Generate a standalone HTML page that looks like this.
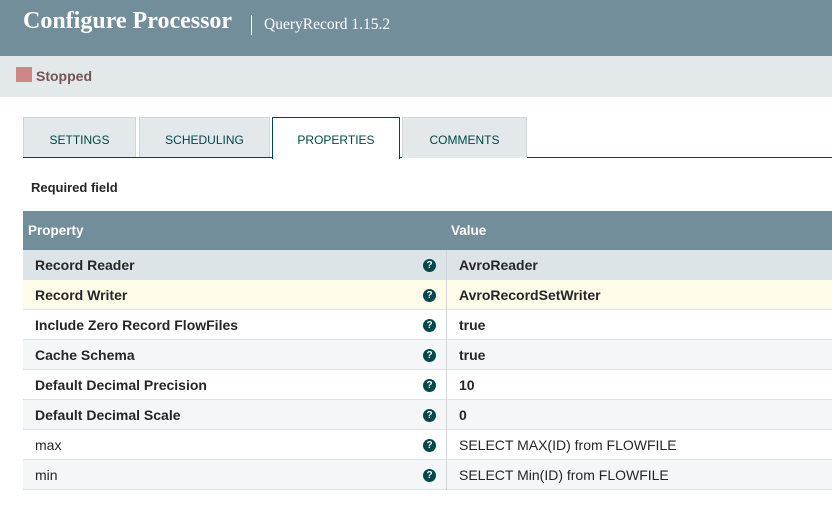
<!DOCTYPE html>
<html><head><style>
*{margin:0;padding:0;box-sizing:border-box}
body{width:832px;height:524px;overflow:hidden;background:#fff;font-family:"Liberation Sans",sans-serif;position:relative}
.hdr{position:absolute;left:0;top:0;width:832px;height:56px;background:#728e9b}
.title{position:absolute;left:23px;top:8px;color:#fff;font-family:"Liberation Serif",serif;font-weight:bold;font-size:24px}
.sep{position:absolute;left:251px;top:15px;width:1px;height:20px;background:#fff}
.sub{position:absolute;left:264px;top:16px;color:#fff;font-family:"Liberation Serif",serif;font-size:15.5px}
.st{position:absolute;left:0;top:56px;width:832px;height:41px;background:#e3e8eb}
.sq{position:absolute;left:16px;top:67px;width:16px;height:15px;background:#d18686}
.stt{position:absolute;left:36px;top:68px;font-size:14px;font-weight:bold;color:#775351}
.tab{position:absolute;top:117px;height:41px;background:#e3e8eb;border:1px solid #cfd6da;border-bottom:none;color:#004849;font-size:12px;text-align:center;line-height:44px}
.tab.on{background:#fff;border:1px solid #004849;border-bottom:none;height:42px}
.line{position:absolute;left:23px;top:157px;width:809px;height:1px;background:#004849}
.req{position:absolute;left:31px;top:180px;font-size:13px;font-weight:bold;color:#262626}
.th{position:absolute;left:23px;top:211px;width:809px;height:39px;background:#728e9b;color:#fff;font-weight:bold;font-size:13.5px}
.row{position:absolute;left:23px;width:809px;height:30px;border-bottom:1px solid #dde4e8;font-size:14px;color:#262626}
.row span{position:absolute;top:7px}
.row .n{left:12px}.row .v{left:436px}
.row .d{position:absolute;left:423px;top:0;width:1px;height:30px;background:#cfd6da}
.q{position:absolute;left:400px;top:9px;width:13px;height:13px;border-radius:50%;background:#004849;color:#fff;font-size:10px;font-weight:bold;text-align:center;line-height:13px}
.b{font-weight:bold}
</style></head><body>
<div class="hdr"></div>
<div class="title">Configure Processor</div>
<div class="sep"></div>
<div class="sub">QueryRecord 1.15.2</div>
<div class="st"></div><div class="sq"></div><div class="stt">Stopped</div>
<div class="tab" style="left:23px;width:113px">SETTINGS</div>
<div class="tab" style="left:139px;width:131px">SCHEDULING</div>
<div class="line"></div>
<div class="tab on" style="left:272px;width:128px">PROPERTIES</div>
<div class="tab" style="left:402px;width:125px">COMMENTS</div>
<div class="req">Required field</div>
<div class="th"><span style="position:absolute;left:5px;top:12px">Property</span><span style="position:absolute;left:428px;top:12px">Value</span></div>
<div class="row b" style="top:250px;background:#dde4e8"><span class="n">Record Reader</span><div class="q">?</div><div class="d"></div><span class="v">AvroReader</span></div>
<div class="row b" style="top:280px;background:#fffbe9"><span class="n">Record Writer</span><div class="q">?</div><div class="d"></div><span class="v">AvroRecordSetWriter</span></div>
<div class="row b" style="top:310px;background:#fff"><span class="n">Include Zero Record FlowFiles</span><div class="q">?</div><div class="d"></div><span class="v">true</span></div>
<div class="row b" style="top:340px;background:#f4f6f7"><span class="n">Cache Schema</span><div class="q">?</div><div class="d"></div><span class="v">true</span></div>
<div class="row b" style="top:370px;background:#fff"><span class="n">Default Decimal Precision</span><div class="q">?</div><div class="d"></div><span class="v">10</span></div>
<div class="row b" style="top:400px;background:#f4f6f7"><span class="n">Default Decimal Scale</span><div class="q">?</div><div class="d"></div><span class="v">0</span></div>
<div class="row" style="top:430px;background:#fff"><span class="n">max</span><div class="q">?</div><div class="d"></div><span class="v">SELECT MAX(ID) from FLOWFILE</span></div>
<div class="row" style="top:460px;background:#f4f6f7"><span class="n">min</span><div class="q">?</div><div class="d"></div><span class="v">SELECT Min(ID) from FLOWFILE</span></div>
</body></html>
